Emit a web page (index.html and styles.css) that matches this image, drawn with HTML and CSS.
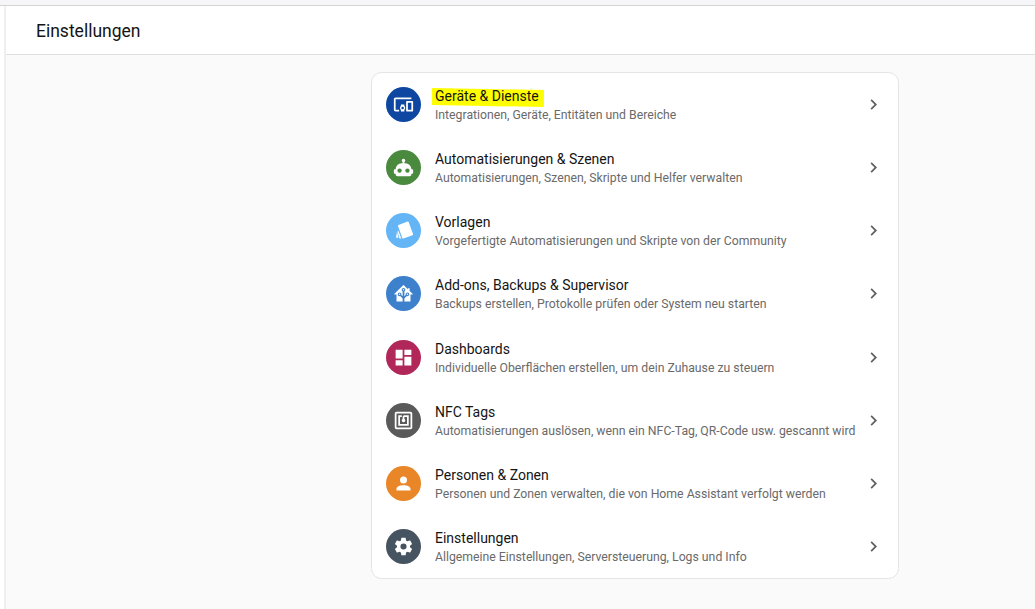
FILE: index.html
```html
<!DOCTYPE html>
<html lang="de">
<head>
    <meta charset="UTF-8">
    <title>Einstellungen</title>
    <link rel="stylesheet" href="styles.css">
</head>
<body>
    <div class="top-strip"></div>
    <div class="app">
        <div class="sidebar-edge"></div>
        <div class="content">
            <header class="toolbar">Einstellungen</header>
            <main class="page">
                <div class="card">
                    <a class="row">
                        <span class="badge badge-devices"><svg viewBox="0 0 24 24"><path d="M3 6H21V4H3C1.9 4 1 4.9 1 6V18C1 19.1 1.9 20 3 20H7V18H3V6M13 12H9V13.78C8.39 14.33 8 15.11 8 16C8 16.89 8.39 17.67 9 18.22V20H13V18.22C13.61 17.67 14 16.88 14 16S13.61 14.33 13 13.78V12M11 17.5C10.17 17.5 9.5 16.83 9.5 16S10.17 14.5 11 14.5 12.5 15.17 12.5 16 11.83 17.5 11 17.5M22 8H16C15.5 8 15 8.5 15 9V19C15 19.5 15.5 20 16 20H22C22.5 20 23 19.5 23 19V9C23 8.5 22.5 8 22 8M21 18H17V10H21V18Z"/></svg></span>
                        <span class="text">
                            <span class="title"><span class="marked">Geräte &amp; Dienste</span></span>
                            <span class="sub">Integrationen, Geräte, Entitäten und Bereiche</span>
                        </span>
                        <svg class="chevron" viewBox="0 0 24 24"><path d="M8.59,16.58L13.17,12L8.59,7.41L10,6L16,12L10,18L8.59,16.58Z"/></svg>
                    </a>
                    <a class="row">
                        <span class="badge badge-robot"><svg viewBox="0 0 24 24"><path d="M12,2A2,2 0 0,1 14,4C14,4.74 13.6,5.39 13,5.73V7H14A7,7 0 0,1 21,14H22A1,1 0 0,1 23,15V18A1,1 0 0,1 22,19H21V20A2,2 0 0,1 19,22H5A2,2 0 0,1 3,20V19H2A1,1 0 0,1 1,18V15A1,1 0 0,1 2,14H3A7,7 0 0,1 10,7H11V5.73C10.4,5.39 10,4.74 10,4A2,2 0 0,1 12,2M7.5,13A2.5,2.5 0 0,0 5,15.5A2.5,2.5 0 0,0 7.5,18A2.5,2.5 0 0,0 10,15.5A2.5,2.5 0 0,0 7.5,13M16.5,13A2.5,2.5 0 0,0 14,15.5A2.5,2.5 0 0,0 16.5,18A2.5,2.5 0 0,0 19,15.5A2.5,2.5 0 0,0 16.5,13Z"/></svg></span>
                        <span class="text">
                            <span class="title">Automatisierungen &amp; Szenen</span>
                            <span class="sub">Automatisierungen, Szenen, Skripte und Helfer verwalten</span>
                        </span>
                        <svg class="chevron" viewBox="0 0 24 24"><path d="M8.59,16.58L13.17,12L8.59,7.41L10,6L16,12L10,18L8.59,16.58Z"/></svg>
                    </a>
                    <a class="row">
                        <span class="badge badge-blueprint"><svg viewBox="0 0 24 24"><rect x="7.8" y="3.2" width="13" height="16.5" rx="1" transform="rotate(-20 14.3 11.5)"/><path d="M4.6 13.5L6.3 20.6L3.4 20Z"/><path d="M6 12L9.4 21L7.4 21.2L5.2 13.5Z"/></svg></span>
                        <span class="text">
                            <span class="title">Vorlagen</span>
                            <span class="sub">Vorgefertigte Automatisierungen und Skripte von der Community</span>
                        </span>
                        <svg class="chevron" viewBox="0 0 24 24"><path d="M8.59,16.58L13.17,12L8.59,7.41L10,6L16,12L10,18L8.59,16.58Z"/></svg>
                    </a>
                    <a class="row">
                        <span class="badge badge-addons"><svg viewBox="0 0 24 24"><path d="M21.8,13H20V21H13V17.67L15.79,14.88L16.5,15C17.66,15 18.6,14.06 18.6,12.9C18.6,11.74 17.66,10.8 16.5,10.8A2.1,2.1 0 0,0 14.4,12.9L14.5,13.61L13,15.13V9.65C13.66,9.29 14.1,8.6 14.1,7.8A2.1,2.1 0 0,0 12,5.7A2.1,2.1 0 0,0 9.9,7.8C9.9,8.6 10.34,9.29 11,9.65V15.13L9.5,13.61L9.6,12.9A2.1,2.1 0 0,0 7.5,10.8A2.1,2.1 0 0,0 5.4,12.9A2.1,2.1 0 0,0 7.5,15L8.21,14.88L11,17.67V21H4V13H2.25C1.83,13 1.42,13 1.42,12.79C1.43,12.57 1.85,12.15 2.28,11.72L11,3C11.33,2.67 11.67,2.33 12,2.33C12.33,2.33 12.67,2.67 13,3L17,7V6H19V9L21.78,11.78C22.18,12.18 22.59,12.59 22.6,12.8C22.6,13 22.2,13 21.8,13M7.5,12A0.9,0.9 0 0,1 8.4,12.9A0.9,0.9 0 0,1 7.5,13.8A0.9,0.9 0 0,1 6.6,12.9A0.9,0.9 0 0,1 7.5,12M16.5,12C17,12 17.4,12.4 17.4,12.9C17.4,13.4 17,13.8 16.5,13.8A0.9,0.9 0 0,1 15.6,12.9A0.9,0.9 0 0,1 16.5,12M12,6.9C12.5,6.9 12.9,7.3 12.9,7.8C12.9,8.3 12.5,8.7 12,8.7C11.5,8.7 11.1,8.3 11.1,7.8C11.1,7.3 11.5,6.9 12,6.9Z"/></svg></span>
                        <span class="text">
                            <span class="title">Add-ons, Backups &amp; Supervisor</span>
                            <span class="sub">Backups erstellen, Protokolle prüfen oder System neu starten</span>
                        </span>
                        <svg class="chevron" viewBox="0 0 24 24"><path d="M8.59,16.58L13.17,12L8.59,7.41L10,6L16,12L10,18L8.59,16.58Z"/></svg>
                    </a>
                    <a class="row">
                        <span class="badge badge-dash"><svg viewBox="0 0 24 24"><path d="M13,3V9H21V3M13,21H21V11H13M3,21H11V15H3M3,13H11V3H3V13Z"/></svg></span>
                        <span class="text">
                            <span class="title">Dashboards</span>
                            <span class="sub">Individuelle Oberflächen erstellen, um dein Zuhause zu steuern</span>
                        </span>
                        <svg class="chevron" viewBox="0 0 24 24"><path d="M8.59,16.58L13.17,12L8.59,7.41L10,6L16,12L10,18L8.59,16.58Z"/></svg>
                    </a>
                    <a class="row">
                        <span class="badge badge-nfc"><svg viewBox="0 0 24 24"><path d="M18,6H13A2,2 0 0,0 11,8V10.28C10.41,10.62 10,11.26 10,12A2,2 0 0,0 12,14C13.11,14 14,13.1 14,12C14,11.26 13.6,10.62 13,10.28V8H16V16H8V8H10V6H8L6,6V18H18M20,20H4V4H20M20,2H4A2,2 0 0,0 2,4V20A2,2 0 0,0 4,22H20C21.11,22 22,21.1 22,20V4C22,2.89 21.11,2 20,2Z"/></svg></span>
                        <span class="text">
                            <span class="title">NFC Tags</span>
                            <span class="sub">Automatisierungen auslösen, wenn ein NFC-Tag, QR-Code usw. gescannt wird</span>
                        </span>
                        <svg class="chevron" viewBox="0 0 24 24"><path d="M8.59,16.58L13.17,12L8.59,7.41L10,6L16,12L10,18L8.59,16.58Z"/></svg>
                    </a>
                    <a class="row">
                        <span class="badge badge-person"><svg viewBox="0 0 24 24"><path d="M12,4A4,4 0 0,1 16,8A4,4 0 0,1 12,12A4,4 0 0,1 8,8A4,4 0 0,1 12,4M12,14C16.42,14 20,15.79 20,18V20H4V18C4,15.79 7.58,14 12,14Z"/></svg></span>
                        <span class="text">
                            <span class="title">Personen &amp; Zonen</span>
                            <span class="sub">Personen und Zonen verwalten, die von Home Assistant verfolgt werden</span>
                        </span>
                        <svg class="chevron" viewBox="0 0 24 24"><path d="M8.59,16.58L13.17,12L8.59,7.41L10,6L16,12L10,18L8.59,16.58Z"/></svg>
                    </a>
                    <a class="row">
                        <span class="badge badge-cog"><svg viewBox="0 0 24 24"><path d="M12,15.5A3.5,3.5 0 0,1 8.5,12A3.5,3.5 0 0,1 12,8.5A3.5,3.5 0 0,1 15.5,12A3.5,3.5 0 0,1 12,15.5M19.43,12.97C19.47,12.65 19.5,12.33 19.5,12C19.5,11.67 19.47,11.34 19.43,11L21.54,9.37C21.73,9.22 21.78,8.95 21.66,8.73L19.66,5.27C19.54,5.05 19.27,4.96 19.05,5.05L16.56,6.05C16.04,5.66 15.5,5.32 14.87,5.07L14.5,2.42C14.46,2.18 14.25,2 14,2H10C9.75,2 9.54,2.18 9.5,2.42L9.13,5.07C8.5,5.32 7.96,5.66 7.44,6.05L4.95,5.05C4.73,4.96 4.46,5.05 4.34,5.27L2.34,8.73C2.21,8.95 2.27,9.22 2.46,9.37L4.57,11C4.53,11.34 4.5,11.67 4.5,12C4.5,12.33 4.53,12.65 4.57,12.97L2.46,14.63C2.27,14.78 2.21,15.05 2.34,15.27L4.34,18.73C4.46,18.95 4.73,19.03 4.95,18.95L7.44,17.94C7.96,18.34 8.5,18.68 9.13,18.93L9.5,21.58C9.54,21.82 9.75,22 10,22H14C14.25,22 14.46,21.82 14.5,21.58L14.87,18.93C15.5,18.67 16.04,18.34 16.56,17.94L19.05,18.95C19.27,19.03 19.54,18.95 19.66,18.73L21.66,15.27C21.78,15.05 21.73,14.78 21.54,14.63L19.43,12.97Z"/></svg></span>
                        <span class="text">
                            <span class="title">Einstellungen</span>
                            <span class="sub">Allgemeine Einstellungen, Serversteuerung, Logs und Info</span>
                        </span>
                        <svg class="chevron" viewBox="0 0 24 24"><path d="M8.59,16.58L13.17,12L8.59,7.41L10,6L16,12L10,18L8.59,16.58Z"/></svg>
                    </a>
                </div>
            </main>
        </div>
    </div>
</body>
</html>
```

FILE: styles.css
```css
html, body {
    height: 100%;
}

body {
    margin: 0;
    font-family: Roboto, "Noto Sans", sans-serif;
    background: #fff;
    color: #141414;
    display: flex;
    flex-direction: column;
    overflow: hidden;
}

/* Browser edge above the app */
.top-strip {
    height: 5px;
    flex: none;
    background: #f6f6f9;
    border-bottom: 1px solid #d4d4d4;
}

.app {
    flex: 1;
    display: flex;
    min-height: 0;
}

.sidebar-edge {
    width: 4px;
    flex: none;
    background: #fff;
    border-right: 2px solid #efefef;
}

.content {
    flex: 1;
    display: flex;
    flex-direction: column;
}

/* Header */
.toolbar {
    height: 49px;
    flex: none;
    padding: 2px 0 0 30px;
    box-sizing: border-box;
    display: flex;
    align-items: center;
    font-size: 17.5px;
    background: #fff;
    border-bottom: 1px solid #e0e0e0;
}

.page {
    flex: 1;
    background: #fafafa;
    padding: 17px 0 0 365px;
}

/* Card with the rows */
.card {
    width: 526px;
    background: #fff;
    border: 1px solid #e4e4e4;
    border-radius: 10.5px;
}

.row {
    height: 63.125px;
    padding: 0 14px;
    display: flex;
    align-items: center;
}

.badge {
    width: 35px;
    height: 35px;
    flex: none;
    margin-right: 14px;
    border-radius: 50%;
    display: flex;
    align-items: center;
    justify-content: center;
}

.badge svg {
    width: 21px;
    height: 21px;
    fill: #fff;
}

.badge-devices { background: #0d47a1; }
.badge-robot { background: #4a8a3f; }
.badge-blueprint { background: #64b5f6; }
.badge-addons { background: #3d80cc; }
.badge-dash { background: #b1275a; }
.badge-nfc { background: #5a5a5a; }
.badge-person { background: #e88628; }
.badge-cog { background: #465462; }

.text {
    flex: 1;
    display: flex;
    flex-direction: column;
    margin-top: 1px;
}

.title {
    font-size: 14px;
    line-height: 20px;
}

.sub {
    font-size: 12.25px;
    line-height: 18px;
    color: #6a6a6a;
}

/* Yellow marker stroke */
.marked {
    position: relative;
    z-index: 0;
}

.marked::before {
    content: "";
    position: absolute;
    z-index: -1;
    left: -3px;
    right: -5px;
    top: 1px;
    bottom: -2px;
    background: #ffff00;
    transform: skewY(1deg);
}

.chevron {
    width: 21px;
    height: 21px;
    flex: none;
    fill: #5f5f5f;
}
```
